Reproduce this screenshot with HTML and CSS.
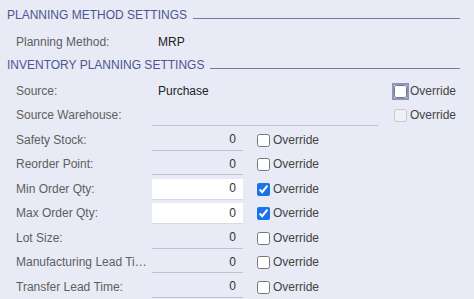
FILE: index.html
```html
<!DOCTYPE html>
<html>
<head>
<meta charset="utf-8">
<link rel="stylesheet" href="styles.css">
</head>
<body>
<div class="page">
  <div class="sec-head">
    <span class="sec-title">PLANNING METHOD SETTINGS</span>
    <span class="sec-line"></span>
  </div>
  <div class="row">
    <span class="lbl">Planning Method:</span>
    <span class="field wide">MRP</span>
  </div>

  <div class="sec-head second">
    <span class="sec-title">INVENTORY PLANNING SETTINGS</span>
    <span class="sec-line"></span>
  </div>
  <div class="row">
    <span class="lbl">Source:</span>
    <span class="field wide">Purchase</span>
    <label class="ovr far"><input type="checkbox" class="focused">Override</label>
  </div>
  <div class="row">
    <span class="lbl">Source Warehouse:</span>
    <span class="field wide ro"></span>
    <label class="ovr far dis"><input type="checkbox" disabled>Override</label>
  </div>
  <div class="row">
    <span class="lbl">Safety Stock:</span>
    <span class="field num ro">0</span>
    <label class="ovr"><input type="checkbox">Override</label>
  </div>
  <div class="row">
    <span class="lbl">Reorder Point:</span>
    <span class="field num ro">0</span>
    <label class="ovr"><input type="checkbox">Override</label>
  </div>
  <div class="row">
    <span class="lbl">Min Order Qty:</span>
    <span class="field num edit">0</span>
    <label class="ovr"><input type="checkbox" checked>Override</label>
  </div>
  <div class="row">
    <span class="lbl">Max Order Qty:</span>
    <span class="field num edit">0</span>
    <label class="ovr"><input type="checkbox" checked>Override</label>
  </div>
  <div class="row">
    <span class="lbl">Lot Size:</span>
    <span class="field num ro">0</span>
    <label class="ovr"><input type="checkbox">Override</label>
  </div>
  <div class="row">
    <span class="lbl">Manufacturing Lead Time:</span>
    <span class="field num ro">0</span>
    <label class="ovr"><input type="checkbox">Override</label>
  </div>
  <div class="row">
    <span class="lbl">Transfer Lead Time:</span>
    <span class="field num ro">0</span>
    <label class="ovr"><input type="checkbox">Override</label>
  </div>
</div>
</body>
</html>
```
FILE: styles.css
```css
html, body {
  margin: 0;
  padding: 0;
  background: #e8eaf6;
  font-family: "Liberation Sans", Arial, sans-serif;
  font-size: 12px;
  overflow: hidden;
}

.page {
  padding: 5px 0 0 7px;
}

.sec-head {
  display: flex;
  align-items: baseline;
  height: 20px;
  line-height: 20px;
  margin-bottom: 5px;
  margin-right: 14px;
}

.sec-head.second {
  margin-top: 0.5px;
  margin-bottom: 4px;
}

.sec-title {
  color: #4f5592;
  white-space: nowrap;
}

.sec-line {
  flex: 1;
  height: 0;
  border-bottom: 1px solid #777b9f;
  margin-left: 6px;
}

.row {
  display: flex;
  align-items: center;
  height: 24.5px;
  padding-left: 9px;
  line-height: 15px;
}

.lbl {
  box-sizing: border-box;
  width: 136px;
  flex: none;
  padding-right: 4px;
  white-space: nowrap;
  overflow: hidden;
  text-overflow: ellipsis;
  color: #5e5e5e;
}

.field {
  box-sizing: border-box;
  height: 21px;
  display: flex;
  align-items: center;
  padding: 0 6px;
  color: #222;
  flex: none;
}

.field.wide {
  width: 226px;
}

.field.num {
  width: 91px;
  justify-content: flex-end;
  padding-right: 7px;
  color: #333;
}

.field.ro {
  border-bottom: 1px solid #bcc0d4;
}

.field.edit {
  background: #ffffff;
  border-bottom: 1px solid #d6d9e6;
}

.ovr {
  display: flex;
  align-items: center;
  margin-left: 14px;
  color: #444;
}

.ovr.far {
  margin-left: 16px;
}

.ovr input {
  margin: 0 3px 0 0;
  width: 13px;
  height: 13px;
  accent-color: #1a73e8;
}

.ovr input.focused {
  outline: 2px solid rgba(105, 120, 175, 0.75);
  outline-offset: 0;
  border-radius: 3px;
}
```
